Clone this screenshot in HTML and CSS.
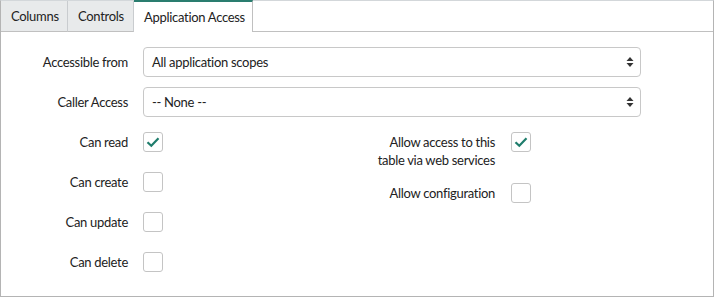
FILE: index.html
```html
<!DOCTYPE html>
<html>
<head>
<meta charset="utf-8">
<link rel="stylesheet" href="styles.css">
</head>
<body>
<div class="frame">
  <div class="tabs">
    <div class="tab">Columns</div>
    <div class="tab">Controls</div>
    <div class="tab active">Application Access</div>
    <div class="tab-fill"></div>
  </div>
  <div class="panel">
    <div class="row">
      <div class="label">Accessible from</div>
      <div class="select"><span>All application scopes</span>
        <svg class="arrows" width="8" height="12" viewBox="0 0 8 12"><path d="M4 1 L7.5 5 L0.5 5 Z M0.5 7 L7.5 7 L4 11 Z" fill="#333"/></svg>
      </div>
    </div>
    <div class="row">
      <div class="label">Caller Access</div>
      <div class="select"><span>-- None --</span>
        <svg class="arrows" width="8" height="12" viewBox="0 0 8 12"><path d="M4 1 L7.5 5 L0.5 5 Z M0.5 7 L7.5 7 L4 11 Z" fill="#333"/></svg>
      </div>
    </div>
    <div class="checks">
      <div class="col left">
        <div class="crow">
          <div class="label">Can read</div>
          <div class="box"><svg width="18" height="18" viewBox="0 0 18 18"><path d="M3.5 9.2 L7.3 12.8 L14.5 5.2" fill="none" stroke="#1f7d6c" stroke-width="2.2"/></svg></div>
        </div>
        <div class="crow">
          <div class="label">Can create</div>
          <div class="box"></div>
        </div>
        <div class="crow">
          <div class="label">Can update</div>
          <div class="box"></div>
        </div>
        <div class="crow">
          <div class="label">Can delete</div>
          <div class="box"></div>
        </div>
      </div>
      <div class="col right">
        <div class="crow tall">
          <div class="label">Allow access to this<br>table via web services</div>
          <div class="box"><svg width="18" height="18" viewBox="0 0 18 18"><path d="M3.5 9.2 L7.3 12.8 L14.5 5.2" fill="none" stroke="#1f7d6c" stroke-width="2.2"/></svg></div>
        </div>
        <div class="crow second">
          <div class="label">Allow configuration</div>
          <div class="box"></div>
        </div>
      </div>
    </div>
  </div>
</div>
</body>
</html>
```
FILE: styles.css
```css
html, body {
  margin: 0;
  padding: 0;
  background: #fff;
}
body {
  font-family: Lato, "Noto Sans", sans-serif;
  font-size: 13px;
  letter-spacing: -0.3px;
  color: #222;
}
.frame {
  width: 712px;
  height: 295px;
  border: 1px solid #b4b4b4;
  border-top: 1px solid #d3d7da;
  box-sizing: content-box;
}
.tabs {
  display: flex;
  height: 31px;
}
.tab {
  height: 30px;
  line-height: 30px;
  padding: 0 10px;
  background: #e8eaeb;
  border-right: 1px solid #c9cccf;
  border-bottom: 1px solid #c0c0c0;
  color: #222;
  white-space: nowrap;
}
.tab:nth-child(1) { width: 46px; }
.tab:nth-child(2) { width: 45px; }
.tab.active {
  background: #fff;
  border-bottom: none;
  border-right: 1px solid #c0c0c0;
  margin-top: -1px;
  border-top: 2px solid #2a7d6f;
  height: 30px;
  width: 98px;
  line-height: 30px;
}
.tab-fill {
  flex: 1;
  border-bottom: 1px solid #c0c0c0;
}
.panel {
  padding: 15px 0 0 0;
}
.row {
  display: flex;
  align-items: center;
  margin-bottom: 10px;
}
.label {
  width: 127px;
  text-align: right;
  margin-right: 15px;
  line-height: 18px;
}
.select {
  height: 28px;
  border: 1px solid #c8c8c8;
  border-radius: 4px;
  display: flex;
  align-items: center;
  justify-content: space-between;
  padding: 0 6px 0 8px;
  box-sizing: content-box;
  width: 482px;
}
.arrows {
  display: block;
}
.checks {
  display: flex;
  padding-top: 5px;
}
.col.left {
  flex: none;
  width: 368px;
}
.col.right {
  flex: 1;
}
.crow {
  display: flex;
  align-items: center;
  height: 20px;
  margin-bottom: 20px;
}
.right .label {
  width: 126px;
  margin-right: 16px;
}
.right .crow.tall {
  align-items: flex-start;
  height: 38px;
  margin-bottom: 13px;
}
.right .crow.tall .label {
  margin-top: 1px;
}
.box {
  width: 18px;
  height: 18px;
  border: 1px solid #c4c4c4;
  border-radius: 3px;
  flex: none;
  background: #fff;
}
.box svg {
  display: block;
}
```
